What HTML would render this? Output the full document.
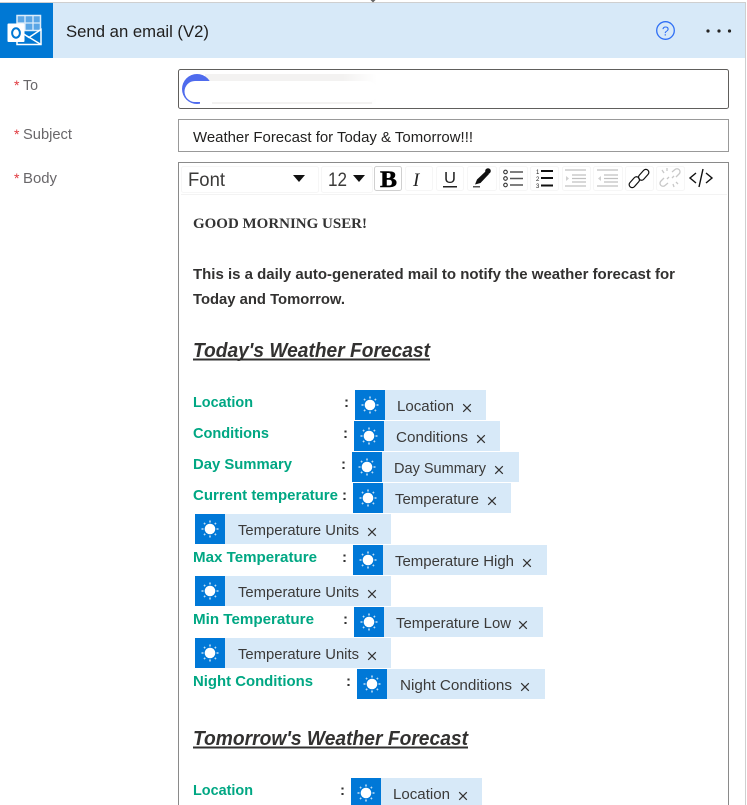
<!DOCTYPE html>
<html><head><meta charset="utf-8"><title>Send an email (V2)</title>
<style>
html,body{margin:0;padding:0;background:#fff;width:747px;height:805px;overflow:hidden}
svg{display:block}
text{font-family:"Liberation Sans",sans-serif;white-space:pre}
.tk{font-size:15px;fill:#3b3a39}
.lb{font-size:15px;font-weight:bold;fill:#00a783}
.cl{font-size:15px;font-weight:bold;fill:#333}
.rs{font-size:14px;fill:#e0393e}
.fl{font-size:15px;fill:#69676a}
.hd{font-size:20.500px;font-weight:bold;font-style:italic;fill:#323130}
.b{font-size:15px;font-weight:bold;fill:#323130}
.tb{fill:#fff;stroke:#f6f6f6;stroke-width:1}
</style></head><body>
<svg width="747" height="805" viewBox="0 0 747 805" xmlns="http://www.w3.org/2000/svg">
<defs>
<linearGradient id="fade" x1="0" x2="1" y1="0" y2="0"><stop offset="0" stop-color="#f3f2f1"/><stop offset=".8" stop-color="#f3f2f1"/><stop offset="1" stop-color="#fff"/></linearGradient>
<g id="sun">
<rect width="30" height="30" fill="#0078d7"/>
<circle cx="15" cy="15" r="5.300" fill="#fff"/>
<g stroke="#fff" stroke-width="1.600" opacity=".75">
<path d="M15 6.500v2M15 21.500v2M6.500 15h2M21.500 15h2M9 9l1.200 1.200M19.800 19.800L21 21M9 21l1.200-1.200M19.800 10.200L21 9"/>
</g>
</g>
<path id="cx" d="M-3.800-3.800L3.800 3.800M3.800-3.800L-3.800 3.800" stroke="#323130" stroke-width="1.200" fill="none"/>
</defs>

<rect x="0" y="2" width="746" height="1" fill="#cfcfcf"/>
<rect x="745" y="2" width="1" height="803" fill="#cfcfcf"/>
<path d="M370.500 0h5l-2.500 2.500z" fill="#666"/>

<!-- header -->
<rect x="0" y="3" width="745" height="55" fill="#d7e9f8"/>
<rect x="0" y="3" width="53" height="55" fill="#0078d4"/>
<g>
<rect x="17" y="15.500" width="23.500" height="15" fill="#5aa6e6" stroke="#dcecfa" stroke-width="1.500"/>
<path d="M25 15.500v15M33 15.500v15M17 23h23.500" stroke="#dcecfa" stroke-width="1.300"/>
<path d="M17 29.500l12 8 12-8v15H17z" fill="#0078d4" stroke="#fff" stroke-width="1.500"/>
<path d="M27 36l14 8.500" stroke="#fff" stroke-width="1.500"/>
<rect x="7.500" y="23.500" width="17" height="18.500" rx="1" fill="#fff"/>
<ellipse cx="16" cy="33" rx="3.900" ry="4.700" fill="none" stroke="#0078d4" stroke-width="2"/>
</g>
<text x="66" y="37" font-size="17" fill="#201f1e" textLength="143" lengthAdjust="spacingAndGlyphs">Send an email (V2)</text>
<circle cx="665.500" cy="30.500" r="8.800" fill="none" stroke="#2f6ff5" stroke-width="1.300"/>
<text x="665.500" y="35.500" font-size="13" fill="#2f6ff5" text-anchor="middle">?</text>
<circle cx="708" cy="31" r="1.600" fill="#252423"/>
<circle cx="719" cy="31" r="1.600" fill="#252423"/>
<circle cx="729.500" cy="31" r="1.600" fill="#252423"/>

<!-- labels -->
<text x="14" y="90" class="rs">*</text><text x="23" y="90" class="fl" textLength="15" lengthAdjust="spacingAndGlyphs">To</text>
<text x="14" y="139" class="rs">*</text><text x="23" y="139" class="fl" textLength="49" lengthAdjust="spacingAndGlyphs">Subject</text>
<text x="14" y="183" class="rs">*</text><text x="23" y="183" class="fl" textLength="34" lengthAdjust="spacingAndGlyphs">Body</text>

<!-- To -->
<rect x="178.500" y="69.500" width="550" height="39" rx="2" fill="#fff" stroke="#605e5c"/>
<rect x="205" y="74" width="172" height="30" fill="url(#fade)"/>
<circle cx="197" cy="89" r="15" fill="#4f6bed"/>
<rect x="184.500" y="81" width="193" height="21" rx="10.500" fill="#fff"/>
<rect x="200" y="102" width="12" height="3" fill="#fff"/>
<rect x="212" y="102" width="160" height="2" fill="#f3f2f1"/>

<!-- Subject -->
<rect x="178.500" y="119.500" width="550" height="32" fill="#fff" stroke="#999"/>
<text x="193" y="142" font-size="15" fill="#201f1e" textLength="280" lengthAdjust="spacingAndGlyphs">Weather Forecast for Today &amp; Tomorrow!!!</text>

<!-- Body -->
<rect x="178.500" y="162.500" width="550" height="650" fill="#fff" stroke="#8a8a8a"/>
<rect x="181" y="194" width="546" height="1" fill="#f3f3f3"/>

<!-- toolbar -->
<rect class="tb" x="181.500" y="166.500" width="137" height="26" rx="2"/>
<rect class="tb" x="321.500" y="166.500" width="51" height="26" rx="2"/>
<rect x="374.500" y="166.500" width="27" height="24" rx="2" fill="#fff" stroke="#d0d0d0"/>
<rect class="tb" x="405.500" y="166.500" width="27" height="24" rx="2"/>
<rect class="tb" x="436.500" y="166.500" width="27" height="24" rx="2"/>
<rect class="tb" x="467.500" y="166.500" width="29" height="24" rx="2"/>
<rect class="tb" x="499.500" y="166.500" width="28" height="24" rx="2"/>
<rect class="tb" x="530.500" y="166.500" width="28" height="24" rx="2"/>
<rect class="tb" x="562.500" y="166.500" width="28" height="24" rx="2"/>
<rect class="tb" x="593.500" y="166.500" width="29" height="24" rx="2"/>
<rect class="tb" x="625.500" y="166.500" width="28" height="24" rx="2"/>
<rect class="tb" x="656.500" y="166.500" width="28" height="24" rx="2"/>

<text x="188" y="186" font-size="19" fill="#3b3a39" textLength="37" lengthAdjust="spacingAndGlyphs">Font</text>
<path d="M293 175h12l-6 7z" fill="#111"/>
<text x="328" y="186" font-size="19" fill="#3b3a39" textLength="19" lengthAdjust="spacingAndGlyphs">12</text>
<path d="M353 175h12l-6 7z" fill="#111"/>
<text x="380" y="187" font-size="23" font-weight="bold" fill="#000" stroke="#000" stroke-width=".5" style="font-family:'Liberation Serif',serif" textLength="17" lengthAdjust="spacingAndGlyphs">B</text>
<text x="413" y="186" font-size="19" font-style="italic" fill="#222" style="font-family:'Liberation Serif',serif">I</text>
<text x="444" y="183" font-size="16" fill="#222" textLength="12" lengthAdjust="spacingAndGlyphs">U</text>
<rect x="443" y="186" width="14" height="1.500" fill="#222"/>
<!-- pencil -->
<path d="M475 184.500l2-5 9-8.500 3 3-8.500 9z" fill="#111"/>
<circle cx="488" cy="171" r="2.800" fill="#111"/>
<rect x="473" y="186" width="7" height="1.500" fill="#555"/>
<!-- bullets -->
<g fill="none" stroke="#333" stroke-width="1.100"><circle cx="505.500" cy="172" r="1.800"/><circle cx="505.500" cy="178.500" r="1.800"/><circle cx="505.500" cy="185" r="1.800"/></g>
<path d="M510 172h13M510 178.500h13M510 185h13" stroke="#555" stroke-width="1.600"/>
<!-- numbers -->
<path d="M541 171h12M541 178h12M541 185.500h12" stroke="#111" stroke-width="2"/>
<text x="536" y="174" font-size="6" fill="#222">1</text><text x="536" y="181" font-size="6" fill="#222">2</text><text x="536" y="188" font-size="6" fill="#222">3</text>
<!-- indent -->
<path d="M565 170h21M572 175h14M572 178.500h14M572 182h14M565 186h21" stroke="#c0c0c0" stroke-width="1.200"/>
<path d="M566 176l3 2.500-3 2.500z" fill="#d0d0d0"/>
<path d="M597 170h21M604 175h14M604 178.500h14M604 182h14M597 186h21" stroke="#c0c0c0" stroke-width="1.200"/>
<path d="M601 176l-3 2.500 3 2.500z" fill="#d0d0d0"/>
<!-- link -->
<g fill="none" stroke="#111" stroke-width="1.200">
<rect x="640.500" y="168.500" width="6" height="12.500" rx="3" transform="rotate(42 643.500 175)"/>
<rect x="631.500" y="176" width="6" height="12.500" rx="3" transform="rotate(42 634.500 182)"/>
</g>
<g fill="none" stroke="#c8c8c8" stroke-width="1.300">
<path d="M672 172l3-2.500a3 3 0 0 1 4 4.500l-3 3M668 183l-3 2.500a3 3 0 0 1-4-4.500l3-3M669 177l-2 2M674 176l-2 2M662 170l2 3M667 168v3M678 184l-2-2M674 187l-1-3"/>
</g>
<path d="M696 173l-6 5 6 5M706 173l6 5-6 5M703 169l-4 18" fill="none" stroke="#111" stroke-width="1.400"/>

<!-- content -->
<text x="193" y="228" font-size="15" font-weight="bold" fill="#333" style="font-family:'Liberation Serif',serif" textLength="174" lengthAdjust="spacingAndGlyphs">GOOD MORNING USER!</text>
<text x="193" y="279" class="b" textLength="482" lengthAdjust="spacingAndGlyphs">This is a daily auto-generated mail to notify the weather forecast for</text>
<text x="193" y="304" class="b" textLength="152" lengthAdjust="spacingAndGlyphs">Today and Tomorrow.</text>
<text x="193" y="357" class="hd" textLength="237" lengthAdjust="spacingAndGlyphs">Today's Weather Forecast</text>
<rect x="193" y="358.500" width="237" height="2" fill="#323130"/>

<!-- rows -->
<text x="193" y="407" class="lb" textLength="60" lengthAdjust="spacingAndGlyphs">Location</text><text x="344" y="407" class="cl">:</text>
<use href="#sun" x="355" y="390"/><rect x="385" y="390" width="101" height="30" fill="#d7e9f8"/><text x="397" y="411" class="tk" textLength="57" lengthAdjust="spacingAndGlyphs">Location</text><use href="#cx" x="467" y="408"/>

<text x="193" y="438" class="lb" textLength="76" lengthAdjust="spacingAndGlyphs">Conditions</text><text x="343" y="438" class="cl">:</text>
<use href="#sun" x="354" y="421"/><rect x="384" y="421" width="116" height="30" fill="#d7e9f8"/><text x="396" y="442" class="tk" textLength="72" lengthAdjust="spacingAndGlyphs">Conditions</text><use href="#cx" x="481" y="439"/>

<text x="193" y="469" class="lb" textLength="99" lengthAdjust="spacingAndGlyphs">Day Summary</text><text x="341" y="469" class="cl">:</text>
<use href="#sun" x="352" y="452"/><rect x="382" y="452" width="137" height="30" fill="#d7e9f8"/><text x="394" y="473" class="tk" textLength="92" lengthAdjust="spacingAndGlyphs">Day Summary</text><use href="#cx" x="499" y="470"/>

<text x="193" y="500" class="lb" textLength="145" lengthAdjust="spacingAndGlyphs">Current temperature</text><text x="342" y="500" class="cl">:</text>
<use href="#sun" x="353" y="483"/><rect x="383" y="483" width="128" height="30" fill="#d7e9f8"/><text x="395" y="504" class="tk" textLength="84" lengthAdjust="spacingAndGlyphs">Temperature</text><use href="#cx" x="492" y="501"/>

<use href="#sun" x="195" y="514"/><rect x="225" y="514" width="166" height="30" fill="#d7e9f8"/><text x="238" y="535" class="tk" textLength="121" lengthAdjust="spacingAndGlyphs">Temperature Units</text><use href="#cx" x="372" y="532"/>

<text x="193" y="562" class="lb" textLength="124" lengthAdjust="spacingAndGlyphs">Max Temperature</text><text x="342" y="562" class="cl">:</text>
<use href="#sun" x="353" y="545"/><rect x="383" y="545" width="164" height="30" fill="#d7e9f8"/><text x="395" y="566" class="tk" textLength="119" lengthAdjust="spacingAndGlyphs">Temperature High</text><use href="#cx" x="527" y="563"/>

<use href="#sun" x="195" y="576"/><rect x="225" y="576" width="166" height="30" fill="#d7e9f8"/><text x="238" y="597" class="tk" textLength="121" lengthAdjust="spacingAndGlyphs">Temperature Units</text><use href="#cx" x="372" y="594"/>

<text x="193" y="624" class="lb" textLength="121" lengthAdjust="spacingAndGlyphs">Min Temperature</text><text x="343" y="624" class="cl">:</text>
<use href="#sun" x="354" y="607"/><rect x="384" y="607" width="159" height="30" fill="#d7e9f8"/><text x="396" y="628" class="tk" textLength="115" lengthAdjust="spacingAndGlyphs">Temperature Low</text><use href="#cx" x="523" y="625"/>

<use href="#sun" x="195" y="638"/><rect x="225" y="638" width="166" height="30" fill="#d7e9f8"/><text x="238" y="659" class="tk" textLength="121" lengthAdjust="spacingAndGlyphs">Temperature Units</text><use href="#cx" x="372" y="656"/>

<text x="193" y="686" class="lb" textLength="120" lengthAdjust="spacingAndGlyphs">Night Conditions</text><text x="346" y="686" class="cl">:</text>
<use href="#sun" x="357" y="669"/><rect x="387" y="669" width="158" height="30" fill="#d7e9f8"/><text x="400" y="690" class="tk" textLength="112" lengthAdjust="spacingAndGlyphs">Night Conditions</text><use href="#cx" x="525" y="687"/>

<text x="193" y="745" class="hd" textLength="275" lengthAdjust="spacingAndGlyphs">Tomorrow's Weather Forecast</text>
<rect x="193" y="746.500" width="275" height="2" fill="#323130"/>

<text x="193" y="795" class="lb" textLength="60" lengthAdjust="spacingAndGlyphs">Location</text><text x="340" y="795" class="cl">:</text>
<use href="#sun" x="351" y="778"/><rect x="381" y="778" width="101" height="30" fill="#d7e9f8"/><text x="393" y="799" class="tk" textLength="57" lengthAdjust="spacingAndGlyphs">Location</text><use href="#cx" x="463" y="796"/>
</svg>
</body></html>
